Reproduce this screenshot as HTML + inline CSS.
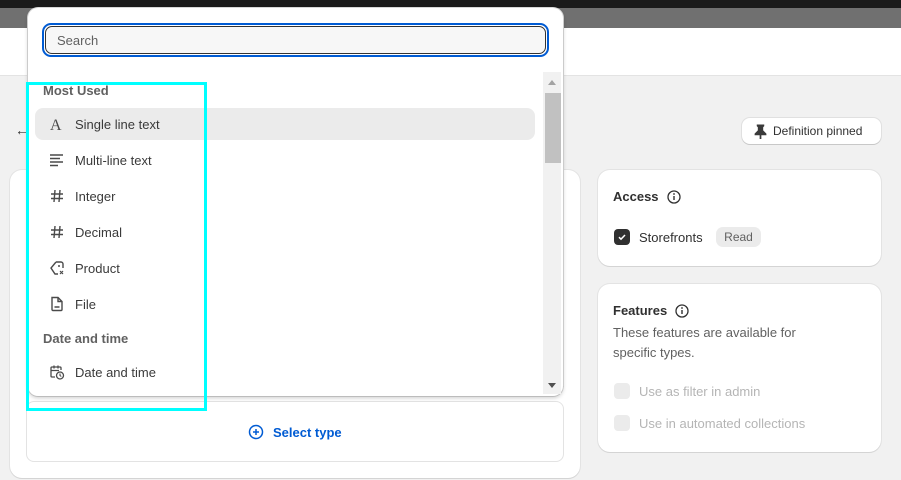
<!DOCTYPE html>
<html><head><style>
*{box-sizing:border-box;margin:0;padding:0}
body{width:901px;height:480px;overflow:hidden;background:#f1f1f1;font-family:"Liberation Sans",sans-serif;font-size:13px;color:#303030;position:relative}
.a{position:absolute}
.card{position:absolute;background:#fff;border-radius:12px;box-shadow:0 1px 0 #d4d4d4,0 0 0 1px #e3e3e3}
.item{position:absolute;left:35px;width:500px;height:32px;display:flex;align-items:center;font-size:13px;color:#3a3a3a}
.item svg{position:absolute;left:14px}
.item span{position:absolute;left:40px}
.hd{position:absolute;left:43px;font-weight:bold;font-size:13px;color:#616161}
</style></head><body>
<div class="a" style="left:0;top:0;width:901px;height:8px;background:#1a1a1a"></div>
<div class="a" style="left:0;top:8px;width:901px;height:20px;background:#707070"></div>
<div class="a" style="left:0;top:28px;width:901px;height:48px;background:#fff;border-bottom:1px solid #e3e3e3"></div>
<div class="a" style="left:15px;top:122px;font-size:14px;color:#303030">←</div>

<div class="card" style="left:10px;top:170px;width:570px;height:308px"></div>
<div class="a" style="left:562px;top:213px;width:2px;height:24px;background:#8a8a8a"></div>
<div class="a" style="left:562px;top:277px;width:2px;height:24px;background:#8a8a8a"></div>
<div class="a" style="left:562px;top:365px;width:2px;height:22px;background:#8a8a8a"></div>
<div class="a" style="left:26px;top:401px;width:538px;height:61px;border:1px solid #e3e3e3;border-radius:8px;background:#fff"></div>
<div class="a" style="left:248px;top:424px;display:flex;align-items:center;color:#005bd3;font-weight:bold;font-size:13px">
<svg width="16" height="16" viewBox="0 0 16 16" style="margin-right:9px"><circle cx="8" cy="8" r="6.5" fill="none" stroke="#005bd3" stroke-width="1.5"/><path d="M8 5v6M5 8h6" stroke="#005bd3" stroke-width="1.5"/></svg>Select type</div>

<div class="a" style="left:742px;top:118px;width:139px;height:26px;background:#fff;border-radius:8px;box-shadow:0 1px 0 #c8c8c8,0 0 0 1px #e0e0e0;font-size:12px;display:flex;align-items:center;padding-left:12px">
<svg width="13" height="15" viewBox="0 0 12 14" style="margin-right:6px"><path d="M2.5 0.5h7v1.5l-1 1v3l3 3v1.5H0.5V9l3-3V3l-1-1z" fill="#3a3a3a"/><rect x="5.2" y="10" width="1.6" height="4" fill="#3a3a3a"/></svg>Definition pinned</div>

<div class="card" style="left:598px;top:170px;width:283px;height:96px"></div>
<div class="a" style="left:613px;top:189px;font-weight:bold;font-size:13px;display:flex;align-items:center">Access<svg width="14" height="14" viewBox="0 0 14 14" style="margin-left:8px"><circle cx="7" cy="7" r="6" fill="none" stroke="#303030" stroke-width="1.3"/><path d="M7 6v4" stroke="#303030" stroke-width="1.4"/><circle cx="7" cy="4" r=".9" fill="#303030"/></svg></div>
<div class="a" style="left:614px;top:229px;width:16px;height:16px;background:#303030;border-radius:4px"><svg width="16" height="16" viewBox="0 0 16 16"><path d="M5 8.2l2 2 4-4.2" stroke="#fff" stroke-width="1.5" fill="none"/></svg></div>
<div class="a" style="left:639px;top:230px">Storefronts</div>
<div class="a" style="left:716px;top:227px;width:45px;height:20px;background:#ebebeb;border-radius:7px;font-size:12px;color:#616161;text-align:center;line-height:20px">Read</div>

<div class="card" style="left:598px;top:284px;width:283px;height:168px"></div>
<div class="a" style="left:613px;top:303px;font-weight:bold;display:flex;align-items:center">Features<svg width="14" height="14" viewBox="0 0 14 14" style="margin-left:8px"><circle cx="7" cy="7" r="6" fill="none" stroke="#303030" stroke-width="1.3"/><path d="M7 6v4" stroke="#303030" stroke-width="1.4"/><circle cx="7" cy="4" r=".9" fill="#303030"/></svg></div>
<div class="a" style="left:613px;top:323px;color:#616161;line-height:20px;width:205px">These features are available for specific types.</div>
<div class="a" style="left:614px;top:383px;width:16px;height:16px;background:#ebebeb;border-radius:4px"></div>
<div class="a" style="left:639px;top:384px;color:#b5b5b5">Use as filter in admin</div>
<div class="a" style="left:614px;top:415px;width:16px;height:16px;background:#ebebeb;border-radius:4px"></div>
<div class="a" style="left:639px;top:416px;color:#b5b5b5">Use in automated collections</div>

<!-- popover -->
<div class="a" style="left:28px;top:8px;width:535px;height:388px;background:#fff;border-radius:10px;box-shadow:0 2px 4px rgba(0,0,0,.2),0 0 0 1px #ddd"></div>
<div class="a" style="left:42px;top:23px;width:507px;height:34px;border:2px solid #005bd3;border-radius:9px;padding:1px"><div style="width:100%;height:100%;border:1px solid #333;border-radius:7px;background:#f7f7f7;color:#616161;padding-left:11px;line-height:28px">Search</div></div>
<div class="a" style="left:543px;top:72px;width:18px;height:322px;background:#f1f1f1"></div>
<div class="a" style="left:545px;top:93px;width:16px;height:70px;background:#c1c1c1"></div>
<div class="a" style="left:548px;top:80px;width:0;height:0;border:4px solid transparent;border-bottom:5px solid #a3a3a3;border-top:0"></div>
<div class="a" style="left:548px;top:383px;width:0;height:0;border:4px solid transparent;border-top:5px solid #505050;border-bottom:0"></div>

<div class="hd" style="top:83px">Most Used</div>
<div class="item" style="top:108px;background:#ebebeb;border-radius:8px"><svg width="16" height="16" viewBox="0 0 16 16"><text x="1" y="14" font-family="Liberation Serif" font-size="16" fill="#4a4a4a">A</text></svg><span>Single line text</span></div>
<div class="item" style="top:144px"><svg width="16" height="16" viewBox="0 0 16 16"><path d="M1 3h13M1 6.5h10M1 10h13M1 13.5h8" stroke="#4a4a4a" stroke-width="1.4"/></svg><span>Multi-line text</span></div>
<div class="item" style="top:180px"><svg width="16" height="16" viewBox="0 0 16 16"><path d="M6 2L5 14M11 2l-1 12M2 6h12M2 10.5h12" stroke="#4a4a4a" stroke-width="1.4"/></svg><span>Integer</span></div>
<div class="item" style="top:216px"><svg width="16" height="16" viewBox="0 0 16 16"><path d="M6 2L5 14M11 2l-1 12M2 6h12M2 10.5h12" stroke="#4a4a4a" stroke-width="1.4"/></svg><span>Decimal</span></div>
<div class="item" style="top:252px"><svg width="16" height="16" viewBox="0 0 16 16"><path d="M7 2h5a2 2 0 012 2v4M9 14H6L2 8l5-6" stroke="#4a4a4a" stroke-width="1.4" fill="none"/><circle cx="10" cy="6" r="1" fill="#4a4a4a"/><path d="M11 11l3 3M11 14l3-3" stroke="#4a4a4a" stroke-width="1.2"/></svg><span>Product</span></div>
<div class="item" style="top:288px"><svg width="16" height="16" viewBox="0 0 16 16"><path d="M3 1.5h6l4 4v8a1 1 0 01-1 1H4a1 1 0 01-1-1z M9 1.5v4h4M5.5 11h5" stroke="#4a4a4a" stroke-width="1.4" fill="none"/></svg><span>File</span></div>
<div class="hd" style="top:331px">Date and time</div>
<div class="item" style="top:356px"><svg width="16" height="16" viewBox="0 0 16 16"><path d="M6 13H3a1 1 0 01-1-1V4a1 1 0 011-1h8a1 1 0 011 1v2M2 6.5h8M5 1.5v3M9 1.5v3" stroke="#4a4a4a" stroke-width="1.3" fill="none"/><circle cx="11" cy="11.5" r="3.5" fill="none" stroke="#4a4a4a" stroke-width="1.3"/><path d="M11 9.5v2l1.3 1" stroke="#4a4a4a" stroke-width="1.1" fill="none"/></svg><span>Date and time</span></div>

<div class="a" style="left:26px;top:82px;width:181px;height:329px;border:3px solid #00ffff"></div>
</body></html>
